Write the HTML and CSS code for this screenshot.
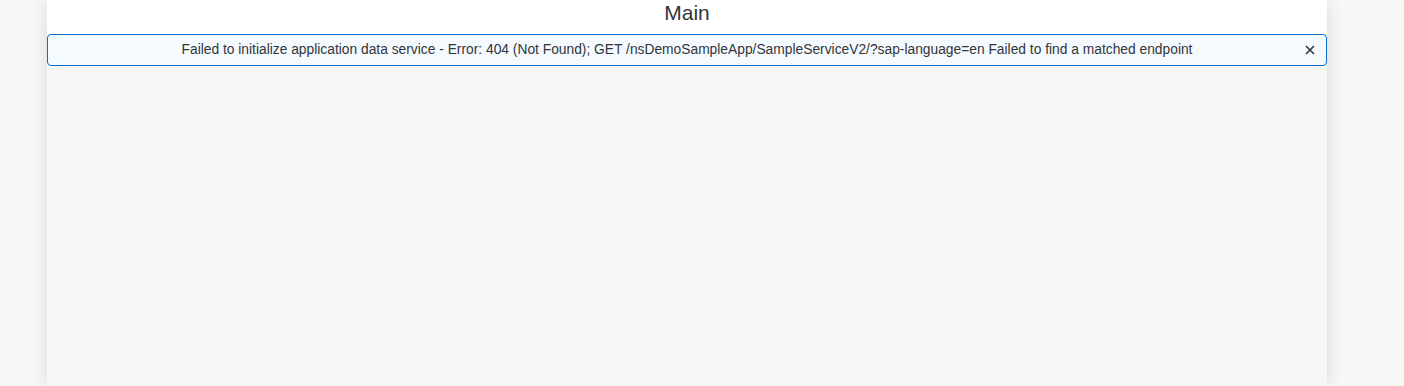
FILE: index.html
```html
<!DOCTYPE html>
<html>
<head>
<meta charset="utf-8">
<link rel="stylesheet" href="styles.css">
</head>
<body>
<div class="shell">
  <header class="bar"><h1 class="title">Main</h1></header>
  <div class="strip">
    <span class="strip-text">Failed to initialize application data service - Error: 404 (Not Found); GET /nsDemoSampleApp/SampleServiceV2/?sap-language=en Failed to find a matched endpoint</span>
    <button class="close" aria-label="Close"><svg width="10" height="10" viewBox="0 0 10 10"><path d="M1 1L9 9M9 1L1 9" stroke="#32363a" stroke-width="1.6" fill="none"/></svg></button>
  </div>
  <main class="content"></main>
</div>
</body>
</html>
```
FILE: styles.css
```css
html, body { margin: 0; padding: 0; height: 100%; }
body {
  background: #f7f7f7;
  font-family: "Liberation Sans", Arial, sans-serif;
  color: #32363a;
  overflow: hidden;
}
.shell {
  width: 1280px;
  margin: 0 auto 0 47px;
  height: 100%;
  background: #f7f7f7;
  box-shadow: 0 0 16px rgba(0,0,0,0.12);
  display: flex;
  flex-direction: column;
}
.bar {
  height: 34px;
  background: #fff;
  display: flex;
  justify-content: center;
}
.title {
  margin: 0;
  font-size: 21px;
  font-weight: normal;
  line-height: 26px;
  color: #32363a;
}
.strip {
  height: 32px;
  box-sizing: border-box;
  border: 1px solid #0a6ed1;
  border-radius: 4px;
  background: #f5faff;
  display: flex;
  align-items: center;
  justify-content: center;
  position: relative;
  font-size: 13.8px;
}
.strip-text { line-height: 16px; }
.close {
  position: absolute;
  right: 11px;
  top: 10px;
  width: 10px;
  height: 10px;
  padding: 0;
  border: 0;
  background: none;
  display: flex;
}
.content { flex: 1; }
```
